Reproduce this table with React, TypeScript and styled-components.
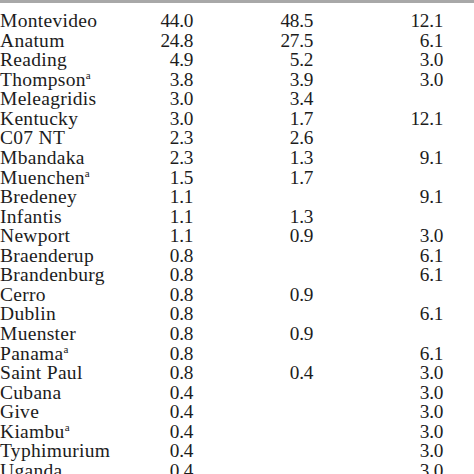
import React from "react";
import styled, { createGlobalStyle } from "styled-components";

const Global = createGlobalStyle`
  html, body { margin: 0; padding: 0; background: #ffffff; }
  body { font-family: "Liberation Serif", "Times New Roman", serif; }
`;

const Page = styled.div`
  width: 474px;
  height: 474px;
  overflow: hidden;
  background: #ffffff;
`;

const TopRule = styled.div`
  height: 2.5px;
  background: #a8a8a8;
`;

const Table = styled.div`
  display: grid;
  grid-template-columns: 143px 50px 120px 130px;
  padding-top: 8.5px;
  font-size: 19.3px;
  line-height: 19.57px;
  color: #1c1c1c;
`;

const Name = styled.div`
  white-space: nowrap;
  font-size: 19.5px;
  letter-spacing: 0.3px;
`;

const Num = styled.div`
  text-align: right;
  white-space: nowrap;
  letter-spacing: -0.3px;
`;

const Sup = styled.sup`
  font-size: 11px;
  line-height: 0;
  vertical-align: 0;
  position: relative;
  top: -7px;
  margin-left: 0px;
  letter-spacing: 0;
`;

type Row = { name: string; sup?: boolean; a: string; b: string; c: string };

const rows: Row[] = [
  { name: "Montevideo", a: "44.0", b: "48.5", c: "12.1" },
  { name: "Anatum", a: "24.8", b: "27.5", c: "6.1" },
  { name: "Reading", a: "4.9", b: "5.2", c: "3.0" },
  { name: "Thompson", sup: true, a: "3.8", b: "3.9", c: "3.0" },
  { name: "Meleagridis", a: "3.0", b: "3.4", c: "" },
  { name: "Kentucky", a: "3.0", b: "1.7", c: "12.1" },
  { name: "C07 NT", a: "2.3", b: "2.6", c: "" },
  { name: "Mbandaka", a: "2.3", b: "1.3", c: "9.1" },
  { name: "Muenchen", sup: true, a: "1.5", b: "1.7", c: "" },
  { name: "Bredeney", a: "1.1", b: "", c: "9.1" },
  { name: "Infantis", a: "1.1", b: "1.3", c: "" },
  { name: "Newport", a: "1.1", b: "0.9", c: "3.0" },
  { name: "Braenderup", a: "0.8", b: "", c: "6.1" },
  { name: "Brandenburg", a: "0.8", b: "", c: "6.1" },
  { name: "Cerro", a: "0.8", b: "0.9", c: "" },
  { name: "Dublin", a: "0.8", b: "", c: "6.1" },
  { name: "Muenster", a: "0.8", b: "0.9", c: "" },
  { name: "Panama", sup: true, a: "0.8", b: "", c: "6.1" },
  { name: "Saint Paul", a: "0.8", b: "0.4", c: "3.0" },
  { name: "Cubana", a: "0.4", b: "", c: "3.0" },
  { name: "Give", a: "0.4", b: "", c: "3.0" },
  { name: "Kiambu", sup: true, a: "0.4", b: "", c: "3.0" },
  { name: "Typhimurium", a: "0.4", b: "", c: "3.0" },
  { name: "Uganda", a: "0.4", b: "", c: "3.0" },
];

export default function App() {
  return (
    <Page>
      <Global />
      <TopRule />
      <Table>
        {rows.map((r) => (
          <React.Fragment key={r.name}>
            <Name>
              {r.name}
              {r.sup && <Sup>a</Sup>}
            </Name>
            <Num>{r.a}</Num>
            <Num>{r.b}</Num>
            <Num>{r.c}</Num>
          </React.Fragment>
        ))}
      </Table>
    </Page>
  );
}
